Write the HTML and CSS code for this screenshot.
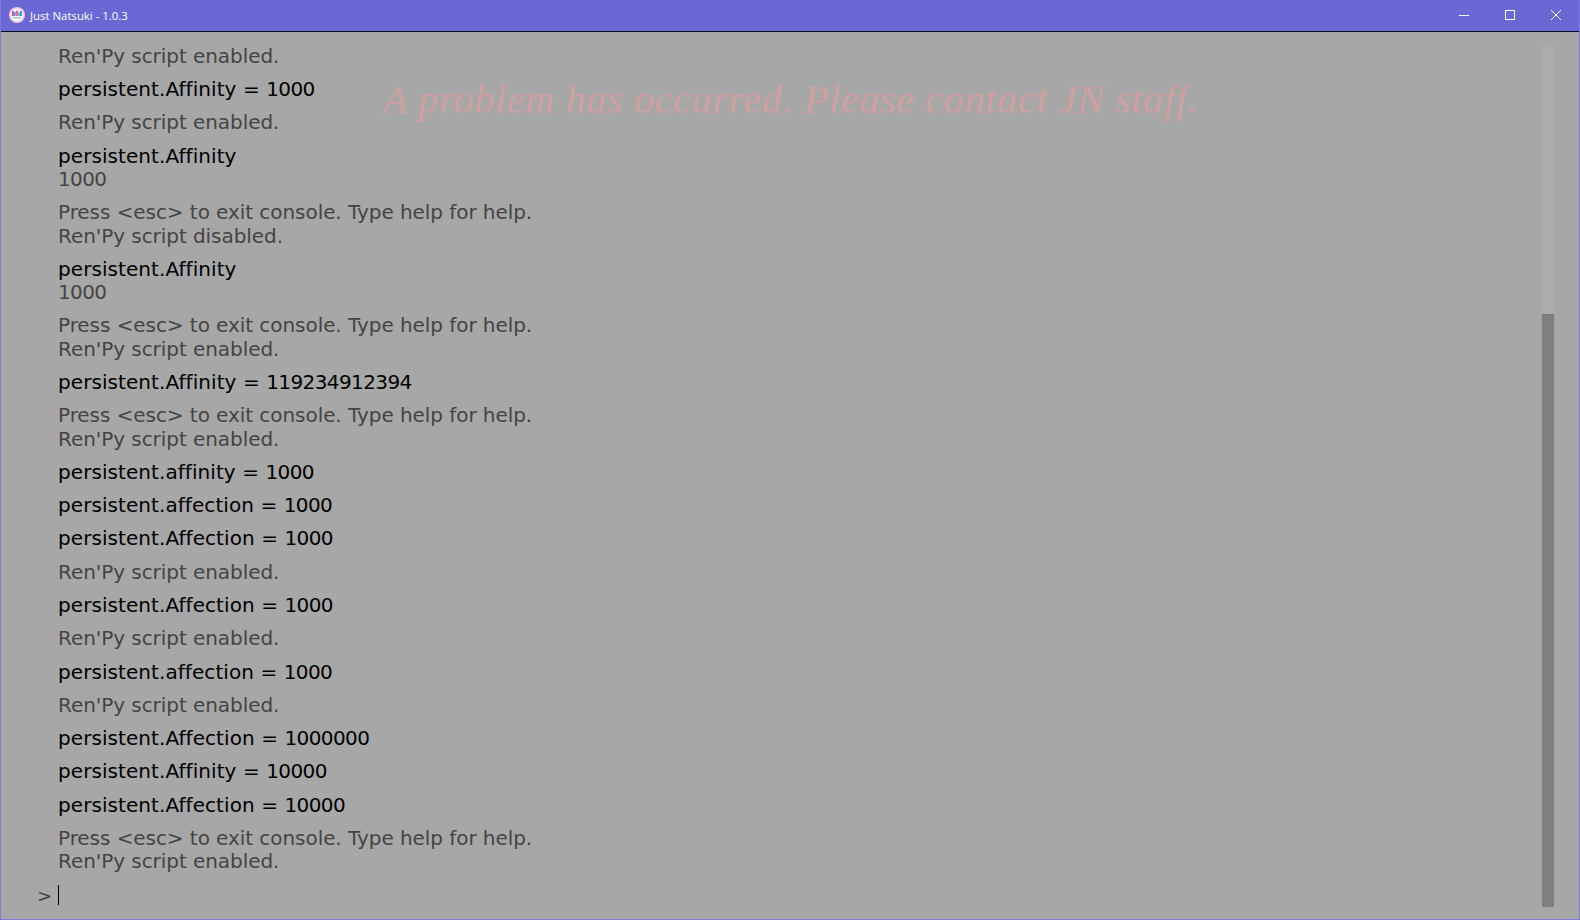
FILE: index.html
```html
<!DOCTYPE html>
<html lang="en">

<head>
    <meta charset="UTF-8">
    <link rel="stylesheet" href="styles.css">
    <title>Just Natsuki - 1.0.3</title>
</head>

<body>
    <div class="window">
        <header class="titlebar">
            <svg class="app-icon" viewBox="0 0 16 16" width="16" height="16">
                <circle cx="8" cy="8" r="8" fill="#f7c6dc"/>
                <circle cx="8" cy="8" r="6.4" fill="#fdf3f8"/>
                <rect x="3" y="4" width="2" height="5" fill="#e0508c"/>
                <rect x="5" y="5" width="2" height="4" fill="#5fb4e0"/>
                <rect x="7" y="3.5" width="2" height="5.5" fill="#e86aa0"/>
                <rect x="9" y="5" width="2" height="4" fill="#6cc7c0"/>
                <rect x="11" y="4" width="2" height="5" fill="#4f8fdc"/>
                <rect x="4" y="10" width="8" height="1.5" fill="#8fd0e8"/>
            </svg>
            <span class="app-title">Just Natsuki - 1.0.3</span>
            <div class="window-buttons">
                <svg class="win-btn" viewBox="0 0 12 12" width="12" height="12">
                    <path d="M1 6.5H11" stroke="#fff" fill="none"/>
                </svg>
                <svg class="win-btn" viewBox="0 0 12 12" width="12" height="12">
                    <rect x="1.5" y="1.5" width="9" height="9" stroke="#fff" fill="none"/>
                </svg>
                <svg class="win-btn" viewBox="0 0 12 12" width="12" height="12">
                    <path d="M1 1L11 11M11 1L1 11" stroke="#fff" fill="none"/>
                </svg>
            </div>
        </header>

        <main class="console">
            <div class="log">
                <div class="entry">
                    <div class="out">Ren'Py script enabled.</div>
                </div>
                <div class="entry">
                    <div class="cmd">persistent.Affinity = <span class="num">1000</span></div>
                </div>
                <div class="entry">
                    <div class="out">Ren'Py script enabled.</div>
                </div>
                <div class="entry">
                    <div class="cmd">persistent.Affinity</div>
                    <div class="out"><span class="num">1000</span></div>
                </div>
                <div class="entry">
                    <div class="out">Press &lt;esc&gt; to exit console. Type help for help.</div>
                    <div class="out">Ren'Py script disabled.</div>
                </div>
                <div class="entry">
                    <div class="cmd">persistent.Affinity</div>
                    <div class="out"><span class="num">1000</span></div>
                </div>
                <div class="entry">
                    <div class="out">Press &lt;esc&gt; to exit console. Type help for help.</div>
                    <div class="out">Ren'Py script enabled.</div>
                </div>
                <div class="entry">
                    <div class="cmd">persistent.Affinity = <span class="num">119234912394</span></div>
                </div>
                <div class="entry">
                    <div class="out">Press &lt;esc&gt; to exit console. Type help for help.</div>
                    <div class="out">Ren'Py script enabled.</div>
                </div>
                <div class="entry">
                    <div class="cmd">persistent.affinity = <span class="num">1000</span></div>
                </div>
                <div class="entry">
                    <div class="cmd">persistent.affection = <span class="num">1000</span></div>
                </div>
                <div class="entry">
                    <div class="cmd">persistent.Affection = <span class="num">1000</span></div>
                </div>
                <div class="entry">
                    <div class="out">Ren'Py script enabled.</div>
                </div>
                <div class="entry">
                    <div class="cmd">persistent.Affection = <span class="num">1000</span></div>
                </div>
                <div class="entry">
                    <div class="out">Ren'Py script enabled.</div>
                </div>
                <div class="entry">
                    <div class="cmd">persistent.affection = <span class="num">1000</span></div>
                </div>
                <div class="entry">
                    <div class="out">Ren'Py script enabled.</div>
                </div>
                <div class="entry">
                    <div class="cmd">persistent.Affection = <span class="num">1000000</span></div>
                </div>
                <div class="entry">
                    <div class="cmd">persistent.Affinity = <span class="num">10000</span></div>
                </div>
                <div class="entry">
                    <div class="cmd">persistent.Affection = <span class="num">10000</span></div>
                </div>
                <div class="entry">
                    <div class="out">Press &lt;esc&gt; to exit console. Type help for help.</div>
                    <div class="out">Ren'Py script enabled.</div>
                </div>
                <div class="prompt">
                    <span class="caret-mark">&gt;</span>
                    <span class="cursor"></span>
                </div>
            </div>

            <div class="scrollbar">
                <div class="thumb"></div>
            </div>

            <div class="problem">A problem has occurred. Please contact JN staff.</div>
        </main>
    </div>
</body>

</html>
```

FILE: styles.css
```css
*,
*::before,
*::after {
    box-sizing: border-box;
}

body {
    margin: 0;
    background: #a7a7a7;
    font-family: "DejaVu Sans", sans-serif;
    overflow: hidden;
}

.window {
    display: flex;
    flex-direction: column;
    height: 920px;
    width: 1580px;
    border-left: 1px solid #7c7ae0;
    border-right: 1px solid #7c7ae0;
    border-bottom: 1px solid #7c7ae0;
    overflow: hidden;
}

.titlebar {
    display: flex;
    align-items: center;
    height: 32px;
    flex-shrink: 0;
    margin: 0 -1px;
    padding: 0 0 1px 9px;
    background: #6a68d4;
    border-bottom: 1px solid #0a0a1a;
    color: #fff;
}

.app-icon {
    flex-shrink: 0;
}

.app-title {
    margin-left: 5px;
    font-family: "Open Sans", sans-serif;
    font-size: 11.4px;
}

.window-buttons {
    display: flex;
    margin-left: auto;
    margin-right: 18px;
    gap: 34px;
}

.console {
    position: relative;
    display: flex;
    flex: 1;
    min-height: 0;
    background: #a7a7a7;
}

.log {
    flex: 1;
    padding: 12.9px 0 0 57px;
    font-size: 20px;
    line-height: 23.25px;
}

.entry {
    margin-bottom: 10.05px;
}

.out {
    color: #444;
    letter-spacing: -0.06px;
}

.cmd {
    color: #000;
    letter-spacing: 0.07px;
}

.num {
    letter-spacing: -0.6px;
}

.prompt {
    display: flex;
    align-items: center;
    height: 22px;
    margin-left: -20px;
    margin-top: 10.6px;
}

.caret-mark {
    width: 20px;
    margin-left: -1px;
    margin-right: 1px;
    font-size: 18px;
    color: #444;
}

.cursor {
    width: 1px;
    height: 20px;
    background: #000;
}

.scrollbar {
    display: flex;
    flex-direction: column;
    justify-content: flex-end;
    width: 12px;
    height: 863px;
    margin: 12px 25px 0 0;
    background: #acacac;
}

.thumb {
    height: 593px;
    background: #7f7f7f;
}

.problem {
    position: absolute;
    left: 382px;
    top: 44px;
    font-family: "Liberation Serif", serif;
    font-style: italic;
    font-size: 40px;
    letter-spacing: 0.7px;
    white-space: nowrap;
    color: #d0a0a0;
}
```
